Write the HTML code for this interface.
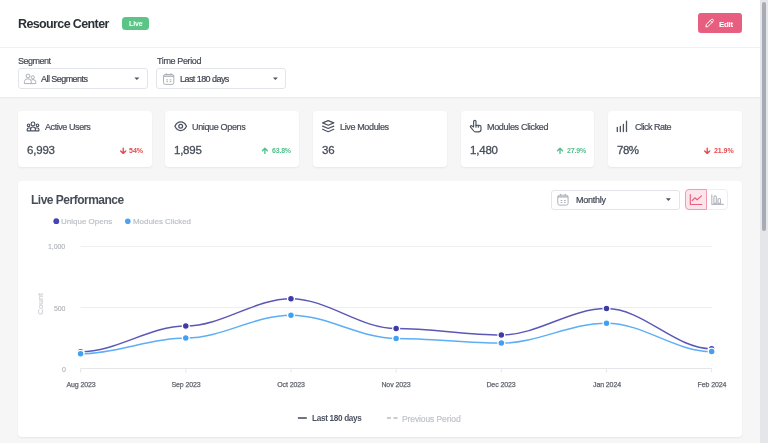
<!DOCTYPE html>
<html><head><meta charset="utf-8"><style>
html,body{margin:0;padding:0;}
body{width:768px;height:443px;overflow:hidden;background:#f6f6f7;position:relative;font-family:"Liberation Sans", sans-serif;}
.t{position:absolute;line-height:1;white-space:nowrap;font-family:"Liberation Sans", sans-serif;will-change:transform;}
svg{overflow:visible}
</style></head><body>
<div style="position:absolute;left:0px;top:0px;width:760px;height:47px;background:#fff;"></div>
<div style="position:absolute;left:0px;top:47px;width:760px;height:1px;background:#f2f2f4;"></div>
<div style="position:absolute;left:0px;top:48px;width:760px;height:49.1px;background:#fff;box-shadow:0 1px 2px rgba(0,0,0,0.06);"></div>
<div class="t" style="left:18px;top:17.52px;font-size:12.5px;font-weight:700;color:#2c2f35;letter-spacing:-0.62px;">Resource Center</div>
<div style="position:absolute;left:122px;top:16.5px;width:27px;height:13.4px;background:#5cc487;border-radius:3.5px;"></div>
<div class="t" style="left:128.5px;top:20.47px;font-size:7px;font-weight:700;color:#fff;letter-spacing:-0.1px;">Live</div>
<div style="position:absolute;left:697.7px;top:13.1px;width:44.2px;height:19.8px;background:#e85e80;border-radius:3px;"></div>
<svg style="position:absolute;left:0;top:0" width="768" height="443"><g fill="none" stroke="#fff" stroke-width="1" stroke-linejoin="round" stroke-linecap="round"><path d="M706,26.6 L706.3,24.4 L711.3,19.6 Q712.4,18.8 713.1,19.6 Q713.8,20.4 713,21.5 L708.1,26.3 Z"/><path d="M710.3,20.6 L712.1,22.4"/></g></svg>
<div class="t" style="left:718.8px;top:20.63px;font-size:8px;font-weight:700;color:#fff;letter-spacing:-0.35px;">Edit</div>
<div class="t" style="left:18px;top:56.88px;font-size:9px;font-weight:400;color:#454b57;letter-spacing:-0.5px;-webkit-text-stroke:0.2px #454b57;">Segment</div>
<div style="position:absolute;left:18.4px;top:68.4px;width:129.4px;height:20.2px;box-sizing:border-box;border:1px solid #e3e5ea;border-radius:3px;background:#fff;"></div>
<div class="t" style="left:40.8px;top:74.78px;font-size:9px;font-weight:400;color:#3f4552;letter-spacing:-0.55px;-webkit-text-stroke:0.2px #3f4552;">All Segments</div>
<div class="t" style="left:156.9px;top:56.88px;font-size:9px;font-weight:400;color:#454b57;letter-spacing:-0.38px;-webkit-text-stroke:0.2px #454b57;">Time Period</div>
<div style="position:absolute;left:156.4px;top:68.4px;width:130.1px;height:20.2px;box-sizing:border-box;border:1px solid #e3e5ea;border-radius:3px;background:#fff;"></div>
<div class="t" style="left:179.7px;top:74.78px;font-size:9px;font-weight:400;color:#3f4552;letter-spacing:-0.56px;-webkit-text-stroke:0.2px #3f4552;">Last 180 days</div>
<svg style="position:absolute;left:0;top:0" width="768" height="443"><g fill="none" stroke="#a3a8b0" stroke-width="0.9"><circle cx="27.95" cy="75.95" r="1.9"/><path d="M24.4,83.6 V81.6 Q24.4,78.8 27.9,78.8 Q31.2,78.8 31.2,81.6 V83.6 Z"/><circle cx="32.8" cy="77.3" r="1.6"/><path d="M31.2,83.6 H35.8 V82.2 Q35.8,79.6 33,79.6 Q31.8,79.6 31.3,80.2"/></g><g fill="none" stroke="#a3a8b0" stroke-width="0.9"><rect x="163.5" y="74.5" width="10.3" height="9.9" rx="1.8"/><path stroke-width="1.2" d="M163.5,76.20 H173.80"/><path d="M166.30,73.20 V75.10 M171.00,73.20 V75.10"/></g><g fill="#a3a8b0"><rect x="166.40" y="79.40" width="1.6" height="0.95"/><rect x="169.70" y="79.40" width="1.6" height="0.95"/><rect x="166.40" y="81.20" width="1.6" height="0.95"/><rect x="169.70" y="81.20" width="1.6" height="0.95"/></g><g></g><g fill="#4b5260"><path d="M134.4,77.4 H139.4 L136.9,80.1 Z"/><path d="M272.9,77.4 H277.9 L275.4,80.1 Z"/></g></svg>
<div style="position:absolute;left:18.1px;top:111.1px;width:133.6px;height:56.1px;background:#fff;border-radius:4px;box-shadow:0 1px 2px rgba(16,24,40,0.07);"></div>
<div class="t" style="left:44.7px;top:122.88px;font-size:9px;font-weight:400;color:#464c58;letter-spacing:-0.43px;-webkit-text-stroke:0.2px #464c58;">Active Users</div>
<div class="t" style="left:26.900000000000002px;top:145.27px;font-size:11.5px;font-weight:400;color:#474d59;letter-spacing:-0.2px;-webkit-text-stroke:0.3px #474d59;">6,993</div>
<div style="position:absolute;left:165.4px;top:111.1px;width:133.6px;height:56.1px;background:#fff;border-radius:4px;box-shadow:0 1px 2px rgba(16,24,40,0.07);"></div>
<div class="t" style="left:191.9px;top:122.88px;font-size:9px;font-weight:400;color:#464c58;letter-spacing:-0.35px;-webkit-text-stroke:0.2px #464c58;">Unique Opens</div>
<div class="t" style="left:174.20000000000002px;top:145.27px;font-size:11.5px;font-weight:400;color:#474d59;letter-spacing:-0.24px;-webkit-text-stroke:0.3px #474d59;">1,895</div>
<div style="position:absolute;left:312.7px;top:111.1px;width:134.0px;height:56.1px;background:#fff;border-radius:4px;box-shadow:0 1px 2px rgba(16,24,40,0.07);"></div>
<div class="t" style="left:339.7px;top:122.88px;font-size:9px;font-weight:400;color:#464c58;letter-spacing:-0.36px;-webkit-text-stroke:0.2px #464c58;">Live Modules</div>
<div class="t" style="left:321.5px;top:145.27px;font-size:11.5px;font-weight:400;color:#474d59;letter-spacing:-0.2px;-webkit-text-stroke:0.3px #474d59;">36</div>
<div style="position:absolute;left:460.7px;top:111.1px;width:133.4px;height:56.1px;background:#fff;border-radius:4px;box-shadow:0 1px 2px rgba(16,24,40,0.07);"></div>
<div class="t" style="left:486.7px;top:122.88px;font-size:9px;font-weight:400;color:#464c58;letter-spacing:-0.32px;-webkit-text-stroke:0.2px #464c58;">Modules Clicked</div>
<div class="t" style="left:469.5px;top:145.27px;font-size:11.5px;font-weight:400;color:#474d59;letter-spacing:-0.2px;-webkit-text-stroke:0.3px #474d59;">1,480</div>
<div style="position:absolute;left:607.8px;top:111.1px;width:133.9px;height:56.1px;background:#fff;border-radius:4px;box-shadow:0 1px 2px rgba(16,24,40,0.07);"></div>
<div class="t" style="left:634.8px;top:122.88px;font-size:9px;font-weight:400;color:#464c58;letter-spacing:-0.5px;-webkit-text-stroke:0.2px #464c58;">Click Rate</div>
<div class="t" style="left:616.5999999999999px;top:145.27px;font-size:11.5px;font-weight:400;color:#474d59;letter-spacing:-0.5px;-webkit-text-stroke:0.3px #474d59;">78%</div>
<div class="t" style="right:624.7px;top:147.27px;font-size:7px;font-weight:700;color:#e5484d;letter-spacing:0px;">54%</div>
<div class="t" style="right:477.2px;top:147.27px;font-size:7px;font-weight:700;color:#4fc08a;letter-spacing:-0.2px;">63.8%</div>
<div class="t" style="right:182.20000000000005px;top:147.27px;font-size:7px;font-weight:700;color:#4fc08a;letter-spacing:-0.15px;">27.9%</div>
<div class="t" style="right:34.39999999999998px;top:147.27px;font-size:7px;font-weight:700;color:#e5484d;letter-spacing:-0.05px;">21.9%</div>
<svg style="position:absolute;left:0;top:0" width="768" height="443"><g fill="none" stroke="#4b5260" stroke-width="1.15" stroke-linecap="round" stroke-linejoin="round"><circle cx="33" cy="123.9" r="1.9"/><circle cx="28.6" cy="125.3" r="1.3"/><circle cx="37.5" cy="125.3" r="1.3"/><path d="M27.2,130.8 V129.4 Q27.2,128 28.6,128 H30.6 M38.9,130.8 V129.4 Q38.9,128 37.5,128 H35.4 M30.6,130.8 V129.2 Q30.6,127 33,127 Q35.4,127 35.4,129.2 V130.8 M27.2,130.8 H38.9"/><path stroke-width="1.25" d="M174.9,126.2 C176.4,123.2 178.4,121.9 180.7,121.9 C183,121.9 185,123.2 186.5,126.2 C185,129.2 183,130.5 180.7,130.5 C178.4,130.5 176.4,129.2 174.9,126.2 Z"/><circle stroke-width="1.25" cx="180.7" cy="126.2" r="1.9"/><path d="M322.6,122.9 L328.2,120.6 L333.8,122.9 L328.2,125.2 Z"/><path d="M322.6,126.1 L328.2,128.5 L333.8,126.1"/><path d="M322.6,129.3 L328.2,131.7 L333.8,129.3"/><path d="M473.6,127 V121.6 Q473.6,120.4 474.8,120.4 Q476,120.4 476,121.6 V125.4 Q478.2,125 480.2,125.6 Q481,126 481,127 V129.4 Q481,131.8 478.6,131.8 H475.4 Q474.4,131.8 473.8,131 L470.6,127.2 Q470,126.2 470.8,125.8 Q471.6,125.4 472.4,126.2 Z"/><path d="M476,125.4 V127.2 M478.3,125.2 V127.2"/></g><g stroke="#4b5260" stroke-width="1.3" stroke-linecap="round"><path d="M617.3,131.6 V127.3 M620.35,131.6 V126.4 M623.4,131.6 V124.3 M626.5,131.6 V121.2"/></g><g fill="none" stroke-width="1.35" stroke-linecap="round" stroke-linejoin="round"><path stroke="#e5484d" d="M123.2,148.2 V153.4 M120.7,150.9 L123.2,153.4 L125.7,150.9"/><path stroke="#4fc08a" d="M264.9,153.4 V148.2 M262.4,150.7 L264.9,148.2 L267.4,150.7"/><path stroke="#4fc08a" d="M560,153.4 V148.2 M557.5,150.7 L560,148.2 L562.5,150.7"/><path stroke="#e5484d" d="M707.2,148.2 V153.4 M704.7,150.9 L707.2,153.4 L709.7,150.9"/></g></svg>
<div style="position:absolute;left:18px;top:181px;width:724px;height:255.5px;background:#fff;border-radius:4px;box-shadow:0 1px 2px rgba(16,24,40,0.07);"></div>
<div class="t" style="left:31.25px;top:193.94px;font-size:12px;font-weight:700;color:#474c57;letter-spacing:-0.5px;">Live Performance</div>
<div style="position:absolute;left:550.7px;top:189.5px;width:129.7px;height:20.1px;box-sizing:border-box;border:1px solid #e3e5ea;border-radius:3px;background:#fff;"></div>
<div class="t" style="left:575.7px;top:196.08px;font-size:9px;font-weight:400;color:#3f4552;letter-spacing:-0.25px;-webkit-text-stroke:0.2px #3f4552;">Monthly</div>
<div style="position:absolute;left:684.6px;top:189.2px;width:43.7px;height:20.7px;box-sizing:border-box;border:1px solid #eceef1;border-radius:4px;background:#fff;"></div>
<div style="position:absolute;left:684.6px;top:189.2px;width:22.3px;height:20.7px;box-sizing:border-box;border:1px solid #f29bb0;border-radius:4px 0 0 4px;background:#fde4ea;"></div>
<svg style="position:absolute;left:0;top:0" width="768" height="443"><g fill="none" stroke="#a3a8b0" stroke-width="0.9"><rect x="557.8" y="195.2" width="10.3" height="9.9" rx="1.8"/><path stroke-width="1.2" d="M557.8,196.90 H568.10"/><path d="M560.60,193.90 V195.80 M565.30,193.90 V195.80"/></g><g fill="#a3a8b0"><rect x="560.70" y="200.10" width="1.6" height="0.95"/><rect x="564.00" y="200.10" width="1.6" height="0.95"/><rect x="560.70" y="201.90" width="1.6" height="0.95"/><rect x="564.00" y="201.90" width="1.6" height="0.95"/></g><path fill="#4b5260" d="M665.9,198.3 H670.9 L668.4,201 Z"/><g fill="none" stroke="#e8607f" stroke-width="1.15" stroke-linecap="round" stroke-linejoin="round"><path d="M690.3,194.6 V204.5 H701.8"/><path d="M692.3,200.5 L694.9,197.8 L697.1,199.8 L701.5,195.9"/></g><g fill="none" stroke="#b5b9c1" stroke-width="1.1" stroke-linecap="round"><path d="M711.8,194.8 V204.4 H723.3"/><path d="M713.9,203.4 V197 Q713.9,195.9 715.1,195.9 Q716.3,195.9 716.3,197 V203.4 Z"/><path d="M717.9,203.4 V199.6 Q717.9,198.5 719.2,198.5 Q720.5,198.5 720.5,199.6 V203.4 Z"/></g></svg>
<svg style="position:absolute;left:0;top:0" width="768" height="443"><circle cx="56.3" cy="221.2" r="2.9" fill="#4543b8"/><circle cx="127.8" cy="221.3" r="2.8" fill="#4aa3f5"/></svg>
<div class="t" style="left:61.2px;top:217.93px;font-size:8px;font-weight:400;color:#bcc0c8;letter-spacing:0px;-webkit-text-stroke:0.2px #bcc0c8;">Unique Opens</div>
<div class="t" style="left:133px;top:217.93px;font-size:8px;font-weight:400;color:#bcc0c8;letter-spacing:-0.05px;-webkit-text-stroke:0.2px #bcc0c8;">Modules Clicked</div>
<div class="t" style="left:48.1px;top:243.47px;font-size:7px;font-weight:400;color:#adb0b6;letter-spacing:-0.1px;-webkit-text-stroke:0.1px #adb0b6;">1,000</div>
<div class="t" style="left:54px;top:304.77px;font-size:7px;font-weight:400;color:#adb0b6;letter-spacing:-0.1px;-webkit-text-stroke:0.1px #adb0b6;">500</div>
<div class="t" style="left:61.5px;top:365.87px;font-size:7px;font-weight:400;color:#adb0b6;letter-spacing:0px;-webkit-text-stroke:0.1px #adb0b6;">0</div>
<div class="t" style="left:40.5px;top:303.5px;font-size:8px;color:#b5b9c1;transform:translate(-50%,-50%) rotate(-90deg);line-height:1">Count</div>
<div class="t" style="left:80.60px;top:381.37px;font-size:7px;color:#62666e;letter-spacing:-0.1px;-webkit-text-stroke:0.25px #62666e;transform:translateX(-50%)">Aug 2023</div>
<div class="t" style="left:185.78px;top:381.37px;font-size:7px;color:#62666e;letter-spacing:-0.1px;-webkit-text-stroke:0.25px #62666e;transform:translateX(-50%)">Sep 2023</div>
<div class="t" style="left:290.96px;top:381.37px;font-size:7px;color:#62666e;letter-spacing:-0.1px;-webkit-text-stroke:0.25px #62666e;transform:translateX(-50%)">Oct 2023</div>
<div class="t" style="left:396.14px;top:381.37px;font-size:7px;color:#62666e;letter-spacing:-0.1px;-webkit-text-stroke:0.25px #62666e;transform:translateX(-50%)">Nov 2023</div>
<div class="t" style="left:501.32px;top:381.37px;font-size:7px;color:#62666e;letter-spacing:-0.1px;-webkit-text-stroke:0.25px #62666e;transform:translateX(-50%)">Dec 2023</div>
<div class="t" style="left:606.50px;top:381.37px;font-size:7px;color:#62666e;letter-spacing:-0.1px;-webkit-text-stroke:0.25px #62666e;transform:translateX(-50%)">Jan 2024</div>
<div class="t" style="left:711.68px;top:381.37px;font-size:7px;color:#62666e;letter-spacing:-0.1px;-webkit-text-stroke:0.25px #62666e;transform:translateX(-50%)">Feb 2024</div>
<svg style="position:absolute;left:0;top:0" width="768" height="443"><g stroke="#eeeeef" stroke-width="1"><path d="M80.5,246.5 H712"/><path d="M80.5,307.5 H712"/></g><path d="M80.5,368.5 H712" stroke="#e6e6e8" stroke-width="1"/><g stroke="#e6e6e8" stroke-width="1"><path d="M80.60,368.5 V372.5"/><path d="M185.78,368.5 V372.5"/><path d="M290.96,368.5 V372.5"/><path d="M396.14,368.5 V372.5"/><path d="M501.32,368.5 V372.5"/><path d="M606.50,368.5 V372.5"/><path d="M711.68,368.5 V372.5"/></g><path d="M80.60,351.70 C117.41,351.70 148.97,326.00 185.78,326.00 C222.59,326.00 254.15,298.75 290.96,298.75 C327.77,298.75 359.33,328.50 396.14,328.50 C432.95,328.50 464.51,335.00 501.32,335.00 C538.13,335.00 569.69,308.60 606.50,308.60 C643.31,308.60 674.87,348.80 711.68,348.80" fill="none" stroke="#5b58b5" stroke-width="1.5"/><path d="M80.60,353.80 C117.41,353.80 148.97,338.10 185.78,338.10 C222.59,338.10 254.15,315.20 290.96,315.20 C327.77,315.20 359.33,338.40 396.14,338.40 C432.95,338.40 464.51,343.10 501.32,343.10 C538.13,343.10 569.69,323.20 606.50,323.20 C643.31,323.20 674.87,351.60 711.68,351.60" fill="none" stroke="#5caef6" stroke-width="1.5"/><circle cx="80.60" cy="351.7" r="3.4" fill="#3d3ba8" stroke="#fff" stroke-width="1.3"/><circle cx="185.78" cy="326.0" r="3.4" fill="#3d3ba8" stroke="#fff" stroke-width="1.3"/><circle cx="290.96" cy="298.75" r="3.4" fill="#3d3ba8" stroke="#fff" stroke-width="1.3"/><circle cx="396.14" cy="328.5" r="3.4" fill="#3d3ba8" stroke="#fff" stroke-width="1.3"/><circle cx="501.32" cy="335.0" r="3.4" fill="#3d3ba8" stroke="#fff" stroke-width="1.3"/><circle cx="606.50" cy="308.6" r="3.4" fill="#3d3ba8" stroke="#fff" stroke-width="1.3"/><circle cx="711.68" cy="348.8" r="3.4" fill="#3d3ba8" stroke="#fff" stroke-width="1.3"/><circle cx="80.60" cy="353.8" r="3.4" fill="#42a0f3" stroke="#fff" stroke-width="1.3"/><circle cx="185.78" cy="338.1" r="3.4" fill="#42a0f3" stroke="#fff" stroke-width="1.3"/><circle cx="290.96" cy="315.2" r="3.4" fill="#42a0f3" stroke="#fff" stroke-width="1.3"/><circle cx="396.14" cy="338.4" r="3.4" fill="#42a0f3" stroke="#fff" stroke-width="1.3"/><circle cx="501.32" cy="343.1" r="3.4" fill="#42a0f3" stroke="#fff" stroke-width="1.3"/><circle cx="606.50" cy="323.2" r="3.4" fill="#42a0f3" stroke="#fff" stroke-width="1.3"/><circle cx="711.68" cy="351.6" r="3.4" fill="#42a0f3" stroke="#fff" stroke-width="1.3"/></svg>
<svg style="position:absolute;left:0;top:0" width="768" height="443"><path d="M297.9,418 H306.8" stroke="#4b5260" stroke-width="1.6"/><path d="M386.9,418 H391 M393.5,418 H397.6" stroke="#b9bdc6" stroke-width="1.6"/></svg>
<div class="t" style="left:312.2px;top:414.56px;font-size:8.2px;font-weight:700;color:#4b5260;letter-spacing:-0.32px;">Last 180 days</div>
<div class="t" style="left:401.8px;top:414.60px;font-size:8.5px;font-weight:400;color:#bfc3cb;letter-spacing:-0.1px;-webkit-text-stroke:0.2px #bfc3cb;">Previous Period</div>
<div style="position:absolute;left:760px;top:0px;width:8px;height:443px;background:#e4e6ea;"></div>
<div style="position:absolute;left:761.8px;top:2px;width:4.2px;height:228.5px;background:#a7acb4;border-radius:2.1px;"></div>
</body></html>
